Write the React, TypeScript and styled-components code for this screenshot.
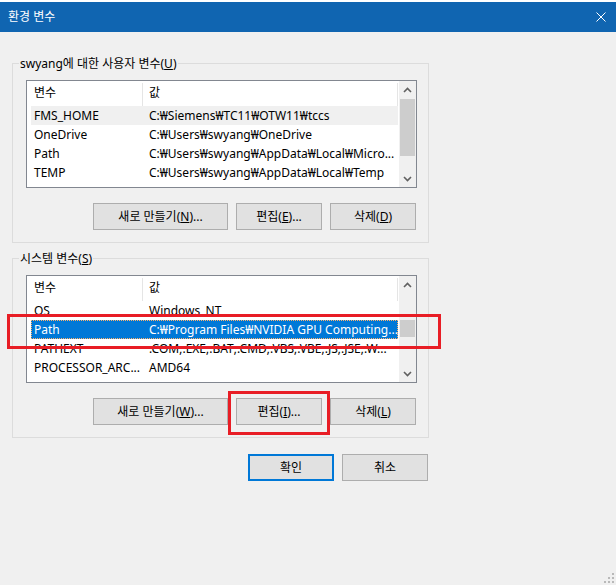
import React from 'react';
import styled, { createGlobalStyle } from 'styled-components';

const Global = createGlobalStyle`
  html, body { margin: 0; padding: 0; background: #f0f0f0; }
  #root { width: 616px; height: 585px; }
  * { box-sizing: border-box; }
`;

const Window = styled.div`
  position: relative;
  width: 616px;
  height: 585px;
  background: #f0f0f0;
  border-top: 2px solid #ffffff;
  overflow: hidden;
  font-family: "Noto Sans", "Noto Sans CJK KR", sans-serif;
  font-size: 12px;
  color: #000;
`;

const TitleBar = styled.div`
  height: 30px;
  background: #1065b1;
  color: #fff;
  display: flex;
  align-items: center;
  justify-content: space-between;
  padding: 0 10px 0 8px;
  line-height: 16px;
`;

const Content = styled.div`
  padding: 23px 0 0 12px;
  width: 429px;
`;

const Group = styled.fieldset<{ $top?: number }>`
  margin: ${(p) => p.$top ?? 0}px 0 0 0;
  padding: 8px 11px 12px 6px;
  border: 1px solid #dcdcdc;
  width: 417px;
  min-width: 0;
`;

const Legend = styled.legend`
  padding: 0 1px;
  line-height: 17px;
  height: 17px;
`;

const GroupBody = styled.div`
  padding-left: 7px;
  display: flex;
  flex-direction: column;
`;

const ListBox = styled.div`
  width: 391px;
  height: 108px;
  border: 1px solid #828790;
  background: #fff;
  display: flex;
  margin-bottom: 15px;
`;

const ListMain = styled.div`
  flex: 1;
  overflow: hidden;
  display: flex;
  flex-direction: column;
`;

const Header = styled.div`
  height: 25px;
  flex-shrink: 0;
  display: flex;
  align-items: flex-end;
`;

const HeaderCell = styled.div<{ $w: number; $pad: number }>`
  width: ${(p) => p.$w}px;
  height: 23px;
  padding-left: ${(p) => p.$pad}px;
  border-right: 1px solid #e5e5e5;
  line-height: 20px;
  white-space: nowrap;
`;

const Row = styled.div<{ $state?: 'selected' | 'inactive' }>`
  height: 19px;
  width: 367px;
  margin-left: 4px;
  flex-shrink: 0;
  display: flex;
  align-items: center;
  line-height: 19px;
  background: ${(p) =>
    p.$state === 'selected' ? '#0078d7' : p.$state === 'inactive' ? '#f0f0f0' : 'transparent'};
  color: ${(p) => (p.$state === 'selected' ? '#ffffff' : '#000000')};
  outline: ${(p) => (p.$state === 'selected' ? '1px dotted #ffb26b' : 'none')};
  outline-offset: -1px;
`;

const Cell = styled.div<{ $w: number; $pad: number }>`
  width: ${(p) => p.$w}px;
  padding-left: ${(p) => p.$pad}px;
  white-space: nowrap;
  overflow: hidden;
`;

const ScrollBar = styled.div`
  width: 17px;
  flex-shrink: 0;
  background: #f0f0f0;
  display: flex;
  flex-direction: column;
`;

const ArrowButton = styled.div`
  height: 17px;
  flex-shrink: 0;
  display: flex;
  align-items: center;
  justify-content: center;
`;

const Track = styled.div`
  flex: 1;
`;

const Thumb = styled.div<{ $top: number; $h: number }>`
  margin: ${(p) => p.$top}px 1px 0 1px;
  height: ${(p) => p.$h}px;
  background: #cdcdcd;
`;

const ButtonRow = styled.div<{ $top?: number }>`
  display: flex;
  justify-content: flex-end;
  gap: 8px;
  padding-right: 1px;
  margin-top: ${(p) => p.$top ?? 0}px;
`;

const Button = styled.button<{ $w: number; $default?: boolean }>`
  width: ${(p) => p.$w}px;
  height: 27px;
  padding: 0;
  margin: 0;
  background: #e1e1e1;
  border: ${(p) => (p.$default ? '2px solid #0078d7' : '1px solid #adadad')};
  font: inherit;
  color: #000;
  display: flex;
  align-items: center;
  justify-content: center;
  line-height: 16px;
`;

const BottomRow = styled(ButtonRow)`
  width: 417px;
`;

const Marker = styled.div<{ $x: number; $y: number; $w: number; $h: number }>`
  position: absolute;
  left: ${(p) => p.$x}px;
  top: ${(p) => p.$y}px;
  width: ${(p) => p.$w}px;
  height: ${(p) => p.$h}px;
  border: 3px solid #e81d25;
  pointer-events: none;
`;

const Grip = styled.svg`
  position: absolute;
  right: 1px;
  bottom: 1px;
`;

const Up = () => (
  <svg width="9" height="6" viewBox="0 0 9 6">
    <path d="M1 5 L4.5 1.5 L8 5" fill="none" stroke="#606060" strokeWidth="1.6" />
  </svg>
);
const Down = () => (
  <svg width="9" height="6" viewBox="0 0 9 6">
    <path d="M1 1 L4.5 4.5 L8 1" fill="none" stroke="#606060" strokeWidth="1.6" />
  </svg>
);

type Item = { name: string; value: string; state?: 'selected' | 'inactive' };

const List: React.FC<{ items: Item[]; thumbTop: number; thumbH: number }> = ({ items, thumbTop, thumbH }) => (
  <ListBox>
    <ListMain>
      <Header>
        <HeaderCell $w={116} $pad={7}>변수</HeaderCell>
        <HeaderCell $w={255} $pad={6}>값</HeaderCell>
      </Header>
      {items.map((it) => (
        <Row key={it.name} $state={it.state}>
          <Cell $w={112} $pad={3}>{it.name}</Cell>
          <Cell $w={255} $pad={6}>{it.value}</Cell>
        </Row>
      ))}
    </ListMain>
    <ScrollBar>
      <ArrowButton><Up /></ArrowButton>
      <Track>
        <Thumb $top={thumbTop} $h={thumbH} />
      </Track>
      <ArrowButton><Down /></ArrowButton>
    </ScrollBar>
  </ListBox>
);

const userVars: Item[] = [
  { name: 'FMS_HOME', value: 'C:₩Siemens₩TC11₩OTW11₩tccs', state: 'inactive' },
  { name: 'OneDrive', value: 'C:₩Users₩swyang₩OneDrive' },
  { name: 'Path', value: 'C:₩Users₩swyang₩AppData₩Local₩Micro...' },
  { name: 'TEMP', value: 'C:₩Users₩swyang₩AppData₩Local₩Temp' },
];

const sysVars: Item[] = [
  { name: 'OS', value: 'Windows_NT' },
  { name: 'Path', value: 'C:₩Program Files₩NVIDIA GPU Computing...', state: 'selected' },
  { name: 'PATHEXT', value: '.COM;.EXE;.BAT;.CMD;.VBS;.VBE;.JS;.JSE;.W...' },
  { name: 'PROCESSOR_ARC...', value: 'AMD64' },
];

export default function App() {
  return (
    <>
      <Global />
      <Window>
        <TitleBar>
          <span>환경 변수</span>
          <svg width="10" height="10" viewBox="0 0 10 10">
            <path d="M0.5 0.5 L9.5 9.5 M9.5 0.5 L0.5 9.5" stroke="#ffffff" strokeWidth="1" />
          </svg>
        </TitleBar>
        <Content>
          <Group>
            <Legend>swyang에 대한 사용자 변수(<u>U</u>)</Legend>
            <GroupBody>
              <List items={userVars} thumbTop={1} thumbH={57} />
              <ButtonRow>
                <Button $w={135}>새로 만들기(<u>N</u>)...</Button>
                <Button $w={86}>편집(<u>E</u>)...</Button>
                <Button $w={86}>삭제(<u>D</u>)</Button>
              </ButtonRow>
            </GroupBody>
          </Group>
          <Group $top={7}>
            <Legend>시스템 변수(<u>S</u>)</Legend>
            <GroupBody>
              <List items={sysVars} thumbTop={27} thumbH={17} />
              <ButtonRow>
                <Button $w={135}>새로 만들기(<u>W</u>)...</Button>
                <Button $w={86}>편집(<u>I</u>)...</Button>
                <Button $w={86}>삭제(<u>L</u>)</Button>
              </ButtonRow>
            </GroupBody>
          </Group>
          <BottomRow $top={16}>
            <Button $w={86} $default>확인</Button>
            <Button $w={86}>취소</Button>
          </BottomRow>
        </Content>
        <Marker $x={7} $y={312} $w={434} $h={35} />
        <Marker $x={228} $y={389} $w={102} $h={44} />
        <Grip width="12" height="12" viewBox="0 0 12 12">
          <rect x="9" y="1" width="2" height="2" fill="#b9b9b9" />
          <rect x="5" y="5" width="2" height="2" fill="#b9b9b9" />
          <rect x="9" y="5" width="2" height="2" fill="#b9b9b9" />
          <rect x="1" y="9" width="2" height="2" fill="#b9b9b9" />
          <rect x="5" y="9" width="2" height="2" fill="#b9b9b9" />
          <rect x="9" y="9" width="2" height="2" fill="#b9b9b9" />
        </Grip>
      </Window>
    </>
  );
}
